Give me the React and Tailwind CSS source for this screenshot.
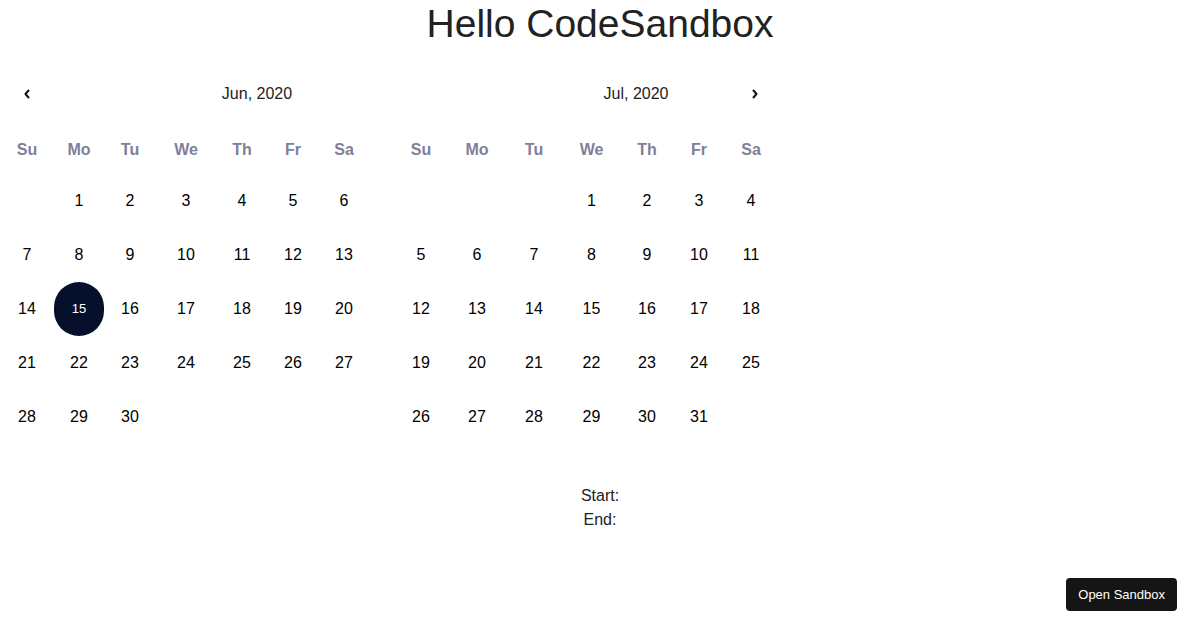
import React from 'react';

const days = ['Su', 'Mo', 'Tu', 'We', 'Th', 'Fr', 'Sa'];

const buildWeeks = (offset, count) => {
  const cells = [];
  for (let i = 0; i < offset; i++) cells.push(null);
  for (let d = 1; d <= count; d++) cells.push(d);
  while (cells.length % 7 !== 0) cells.push(null);
  return cells;
};

const Chevron = ({ dir }) => (
  <svg width="8" height="10" viewBox="0 0 8 10" fill="none">
    <path
      d={dir === 'left' ? 'M5.5 1.5L2.5 5l3 3.5' : 'M2.5 1.5L5.5 5l-3 3.5'}
      stroke="#111"
      strokeWidth="2"
      strokeLinecap="round"
      strokeLinejoin="round"
    />
  </svg>
);

const Month = ({ cols, cells, selected }) => (
  <div>
    <div className={`grid ${cols} h-[48px] mt-[17px] items-center`}>
      {days.map((d) => (
        <div key={d} className="text-center text-[16px] font-bold text-[#7f7f99]">{d}</div>
      ))}
    </div>
    <div className={`grid ${cols}`}>
      {cells.map((c, i) => (
        <div key={i} className="h-[54px] flex items-center justify-center text-[16px] text-black">
          {c === selected ? (
            <div className="w-full h-full rounded-full bg-[#06102b] text-white text-[13px] flex items-center justify-center">{c}</div>
          ) : (
            c
          )}
        </div>
      ))}
    </div>
  </div>
);

export default function App() {
  const june = buildWeeks(1, 30);
  const july = buildWeeks(3, 31);

  return (
    <div className="w-[1200px] h-[630px] bg-white relative" style={{ fontFamily: '"Liberation Sans", Arial, sans-serif' }}>
      <h1 className="text-[39px] leading-[48px] text-center text-[#222]">Hello CodeSandbox</h1>

      <div className="flex mt-[31px]">
        <div className="w-[370px]">
          <div className="flex h-[30px] items-center">
            <button className="w-[54px] flex justify-center">
              <Chevron dir="left" />
            </button>
            <div className="w-[200px] ml-[103px] text-center text-[16px] text-[#222]">Jun, 2020</div>
          </div>
          <Month cols="grid-cols-[54px_50px_52px_60px_52px_50px_52px]" cells={june} selected={15} />
        </div>

        <div className="w-[384px] ml-[23px]">
          <div className="flex h-[30px] items-center">
            <div className="w-[200px] ml-[143px] text-center text-[16px] text-[#222]">Jul, 2020</div>
            <button className="w-[38px] flex justify-center">
              <Chevron dir="right" />
            </button>
          </div>
          <Month cols="grid-cols-[56px_56px_58px_57px_54px_50px_54px]" cells={july} />
        </div>
      </div>

      <div className="mt-[40px] text-center text-[16px] leading-[24px] text-[#222]">
        <div>Start:</div>
        <div>End:</div>
      </div>

      <button className="absolute right-[23px] bottom-[19px] h-[33px] px-[12px] rounded-[4px] bg-[#151515] text-white text-[13px]">
        Open Sandbox
      </button>
    </div>
  );
}
